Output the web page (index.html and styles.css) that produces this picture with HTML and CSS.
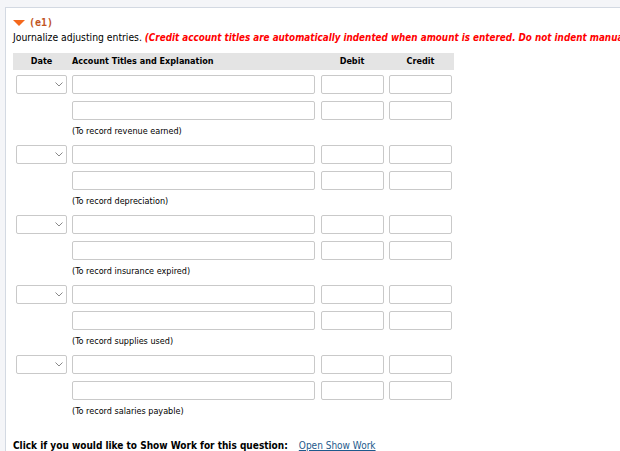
FILE: index.html
```html
<!DOCTYPE html>
<html>
<head>
<meta charset="utf-8">
<link rel="stylesheet" href="styles.css">
</head>
<body>
<div class="panel">
  <div class="title"><span class="tri"></span><span class="qid">(e1)</span></div>
  <div class="instr">Journalize adjusting entries. <span class="note">(Credit account titles are automatically indented when amount is entered. Do not indent manually.)</span></div>
  <div class="grid">
    <div class="hd c-date">Date</div>
    <div class="hd c-acct">Account Titles and Explanation</div>
    <div class="hd c-num">Debit</div>
    <div class="hd c-num">Credit</div>

    <div class="sel"><svg width="8" height="5" viewBox="0 0 8 5"><path d="M0.5 0.5 L4 4 L7.5 0.5" fill="none" stroke="#888" stroke-width="1"/></svg></div>
    <div class="inp"></div><div class="inp num"></div><div class="inp"></div>
    <div></div><div class="inp r2"></div><div class="inp num r2"></div><div class="inp r2"></div>
    <div></div><div class="lbl">(To record revenue earned)</div><div></div><div></div>

    <div class="sel"><svg width="8" height="5" viewBox="0 0 8 5"><path d="M0.5 0.5 L4 4 L7.5 0.5" fill="none" stroke="#888" stroke-width="1"/></svg></div>
    <div class="inp"></div><div class="inp num"></div><div class="inp"></div>
    <div></div><div class="inp r2"></div><div class="inp num r2"></div><div class="inp r2"></div>
    <div></div><div class="lbl">(To record depreciation)</div><div></div><div></div>

    <div class="sel"><svg width="8" height="5" viewBox="0 0 8 5"><path d="M0.5 0.5 L4 4 L7.5 0.5" fill="none" stroke="#888" stroke-width="1"/></svg></div>
    <div class="inp"></div><div class="inp num"></div><div class="inp"></div>
    <div></div><div class="inp r2"></div><div class="inp num r2"></div><div class="inp r2"></div>
    <div></div><div class="lbl">(To record insurance expired)</div><div></div><div></div>

    <div class="sel"><svg width="8" height="5" viewBox="0 0 8 5"><path d="M0.5 0.5 L4 4 L7.5 0.5" fill="none" stroke="#888" stroke-width="1"/></svg></div>
    <div class="inp"></div><div class="inp num"></div><div class="inp"></div>
    <div></div><div class="inp r2"></div><div class="inp num r2"></div><div class="inp r2"></div>
    <div></div><div class="lbl">(To record supplies used)</div><div></div><div></div>

    <div class="sel"><svg width="8" height="5" viewBox="0 0 8 5"><path d="M0.5 0.5 L4 4 L7.5 0.5" fill="none" stroke="#888" stroke-width="1"/></svg></div>
    <div class="inp"></div><div class="inp num"></div><div class="inp"></div>
    <div></div><div class="inp r2"></div><div class="inp num r2"></div><div class="inp r2"></div>
    <div></div><div class="lbl">(To record salaries payable)</div><div></div><div></div>
  </div>
  <div class="showwork"><b>Click if you would like to Show Work for this question:</b><a class="link" href="#">Open Show Work</a></div>
</div>
</body>
</html>
```
FILE: styles.css
```css
html, body {
  margin: 0;
  padding: 0;
  background: #f4f5f8;
  overflow: hidden;
  height: 451px;
}
body {
  font-family: "DejaVu Sans Condensed", "DejaVu Sans", sans-serif;
  color: #000;
}
.panel {
  margin: 7px 0 0 5px;
  border-top: 1px solid #d3d9e2;
  border-left: 1px solid #d3d9e2;
  background: #fff;
  padding: 7px 0 20px 7px;
  white-space: nowrap;
}
.title {
  display: flex;
  align-items: center;
  height: 14px;
}
.tri {
  width: 0;
  height: 0;
  border-left: 6px solid transparent;
  border-right: 6px solid transparent;
  border-top: 6px solid #f4681c;
  margin: 1px 4px 0 0;
}
.qid {
  font-family: "DejaVu Sans Mono", monospace;
  font-weight: bold;
  font-size: 10px;
  color: #c1541e;
}
.instr {
  font-size: 10.3px;
  line-height: 12px;
  margin-top: 2px;
}
.note {
  color: #f00;
  font-weight: bold;
  font-style: italic;
  font-size: 9.8px;
}
.grid {
  display: grid;
  grid-template-columns: 51px 243px 64px 63px;
  column-gap: 5px;
  width: 441px;
  padding: 0 3px;
  margin-top: 9px;
  background: linear-gradient(#e4e4e4, #e4e4e4) top / 100% 17px no-repeat;
  box-sizing: border-box;
}
.hd {
  height: 17px;
  line-height: 17px;
  font-size: 9px;
  font-weight: bold;
  margin-bottom: 5px;
}
.c-date, .c-num { text-align: center; }
.inp, .sel {
  height: 19px;
  border: 1px solid #c9c9c9;
  border-radius: 2px;
  box-sizing: border-box;
  background: #fff;
}
.num { margin-left: 1px; }
.sel {
  display: flex;
  align-items: center;
  justify-content: flex-end;
  padding-right: 3px;
}
.r2 { margin-top: 7px; }
.lbl {
  font-size: 9px;
  height: 25px;
  line-height: 22px;
}
.showwork {
  margin-top: 15px;
  font-size: 10px;
  line-height: 12px;
}
.link {
  margin-left: 11px;
  color: #1e5a8c;
  text-decoration: underline;
}
```
